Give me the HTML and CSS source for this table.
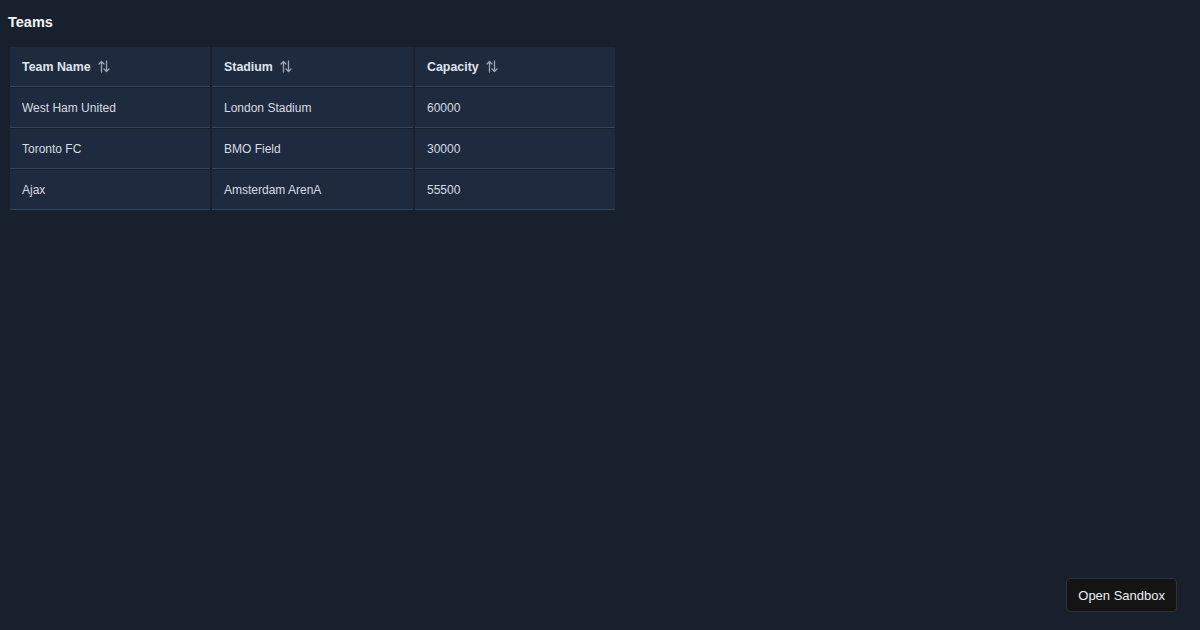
FILE: index.html
```html
<!DOCTYPE html>
<html lang="en">
<head>
  <meta charset="UTF-8" />
  <title>Teams</title>
  <link rel="stylesheet" href="styles.css">
</head>
<body>
  <h1 class="title">Teams</h1>
  <table class="teams">
    <thead>
      <tr>
        <th class="col">Team Name <svg class="sort" viewBox="0 0 12 13" width="12" height="13"><path d="M3.5 12V1.5M1 4l2.5-2.5L6 4M8.5 1v10.5M6 9l2.5 2.5L11 9"/></svg></th>
        <th class="col">Stadium <svg class="sort" viewBox="0 0 12 13" width="12" height="13"><path d="M3.5 12V1.5M1 4l2.5-2.5L6 4M8.5 1v10.5M6 9l2.5 2.5L11 9"/></svg></th>
        <th class="col">Capacity <svg class="sort" viewBox="0 0 12 13" width="12" height="13"><path d="M3.5 12V1.5M1 4l2.5-2.5L6 4M8.5 1v10.5M6 9l2.5 2.5L11 9"/></svg></th>
      </tr>
    </thead>
    <tbody>
      <tr><td>West Ham United</td><td>London Stadium</td><td>60000</td></tr>
      <tr><td>Toronto FC</td><td>BMO Field</td><td>30000</td></tr>
      <tr><td>Ajax</td><td>Amsterdam ArenA</td><td>55500</td></tr>
    </tbody>
  </table>

  <button class="sandbox-btn">Open Sandbox</button>
</body>
</html>
```

FILE: styles.css
```css
html, body {
  margin: 0;
  height: 100%;
  background: #18202e;
  font-family: "Liberation Sans", Arial, sans-serif;
  color: #d9dee6;
}

body {
  padding: 8px;
  box-sizing: border-box;
}

.title {
  font-size: 14.5px;
  font-weight: bold;
  color: #f2f4f7;
  margin: 6px 0 16px;
  line-height: 16px;
}

.teams {
  border-spacing: 2px 1px;
  font-size: 12px;
}

.teams th,
.teams td {
  background: #1e2b3e;
  border-bottom: 1px solid #33445d;
  box-sizing: border-box;
  padding: 0 12px;
  text-align: left;
  vertical-align: middle;
}

.teams th {
  height: 40px;
  font-weight: bold;
  font-size: 12.4px;
  color: #dfe4ec;
}

.teams th.col {
  width: 200px;
}

.teams tr th:nth-child(2),
.teams tr td:nth-child(2) {
  width: 201px;
}

.teams td {
  height: 40px;
  color: #d6dbe3;
}

.sort {
  vertical-align: -2px;
  margin-left: 4px;
  fill: none;
  stroke: #9aa6b6;
  stroke-width: 1.3;
  stroke-linecap: round;
  stroke-linejoin: round;
}

.sandbox-btn {
  position: fixed;
  right: 23px;
  bottom: 18px;
  background: #141414;
  color: #eceef1;
  border: 1px solid #2f3137;
  border-radius: 4px;
  padding: 0 11px;
  height: 34px;
  font-family: "Liberation Sans", Arial, sans-serif;
  font-size: 13px;
}
```
